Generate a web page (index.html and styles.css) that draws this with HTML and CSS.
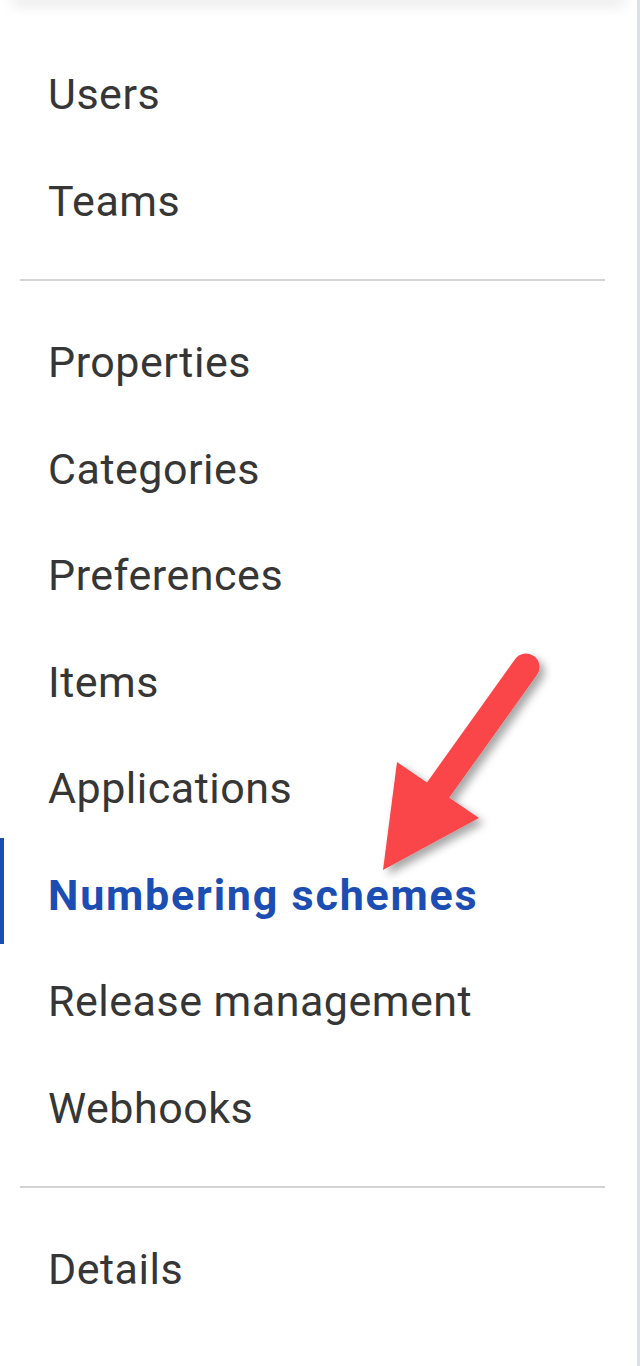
FILE: index.html
```html
<!DOCTYPE html>
<html lang="en">
<head>
    <meta charset="UTF-8">
    <meta name="viewport" content="width=device-width, initial-scale=1.0">
    <title>Company settings</title>
    <link rel="stylesheet" href="styles.css">
</head>
<body>
    <nav class="sidebar">
        <div class="top-shadow"></div>
        <ul class="menu-group first">
            <li class="menu-item">Users</li>
            <li class="menu-item">Teams</li>
        </ul>
        <hr class="divider">
        <ul class="menu-group">
            <li class="menu-item">Properties</li>
            <li class="menu-item">Categories</li>
            <li class="menu-item">Preferences</li>
            <li class="menu-item">Items</li>
            <li class="menu-item">Applications</li>
            <li class="menu-item active">Numbering schemes</li>
            <li class="menu-item">Release management</li>
            <li class="menu-item">Webhooks</li>
        </ul>
        <hr class="divider">
        <ul class="menu-group">
            <li class="menu-item">Details</li>
        </ul>

        <svg class="callout-arrow" width="200" height="260" viewBox="360 630 200 260">
            <defs>
                <filter id="arrowShadow" x="-30%" y="-30%" width="160%" height="160%">
                    <feDropShadow dx="5" dy="5" stdDeviation="4" flood-color="#000" flood-opacity="0.35"/>
                </filter>
            </defs>
            <g filter="url(#arrowShadow)" fill="#fa4548">
                <line x1="526" y1="667" x2="436" y2="793" stroke="#fa4548" stroke-width="27" stroke-linecap="round"/>
                <polygon points="397,762 479,818 383,870"/>
            </g>
        </svg>
    </nav>
</body>
</html>
```

FILE: styles.css
```css
body {
    margin: 0;
    background-color: #fff;
    font-family: Roboto, "Liberation Sans", sans-serif;
}
.sidebar {
    position: relative;
    width: 637px;
    min-height: 1366px;
    border-right: 3px solid #dce1e7;
    background-color: #fff;
    overflow: hidden;
}
.top-shadow {
    height: 0;
    margin: 0 18px;
    box-shadow: 0 0 14px 6px rgba(0, 0, 0, 0.09);
}
.menu-group {
    list-style: none;
    margin: 0;
    padding: 0;
}
.menu-group.first {
    padding-top: 40px;
}
.menu-item {
    position: relative;
    height: 106.5px;
    line-height: 108px;
    padding-left: 48px;
    font-size: 43px;
    color: #363636;
    letter-spacing: 0.5px;
}
.menu-item.active {
    color: #1b4db3;
    font-weight: bold;
    letter-spacing: 1.8px;
}
.menu-item.active::before {
    content: "";
    position: absolute;
    left: 0;
    top: -3px;
    bottom: 3px;
    width: 4px;
    background-color: #1b4db3;
}
.divider {
    border: 0;
    height: 2px;
    background-color: #d3d3d3;
    margin: 26px 32px 27px 20px;
}
.callout-arrow {
    position: absolute;
    left: 360px;
    top: 630px;
}
```
